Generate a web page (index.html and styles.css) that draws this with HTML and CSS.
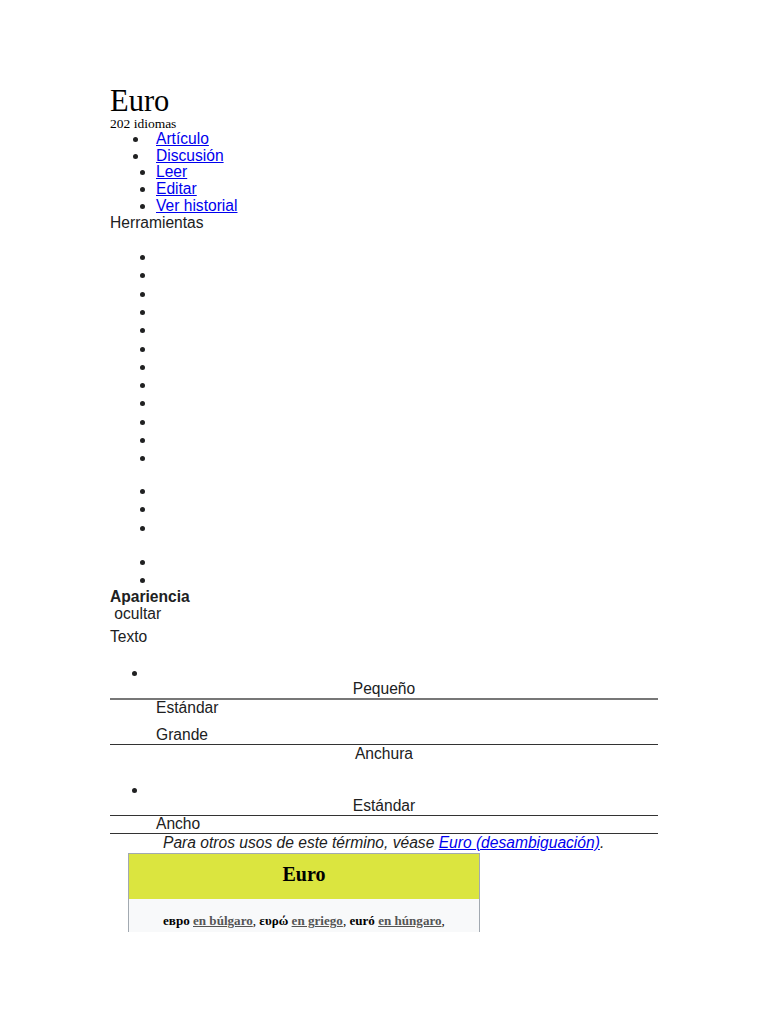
FILE: index.html
```html
<!DOCTYPE html>
<html lang="es">
<head>
<meta charset="utf-8">
<title>Euro</title>
<link rel="stylesheet" href="styles.css">
</head>
<body>
<div class="page">
  <h1 class="title">Euro</h1>
  <div class="langs">202 idiomas</div>
  <ul class="nav">
    <li class="nav-wide"><a href="#">Artículo</a></li>
    <li class="nav-wide"><a href="#">Discusión</a></li>
    <li><a href="#">Leer</a></li>
    <li><a href="#">Editar</a></li>
    <li><a href="#">Ver historial</a></li>
  </ul>
  <div class="plain">Herramientas</div>
  <ul class="empty g1">
    <li></li><li></li><li></li><li></li><li></li><li></li>
    <li></li><li></li><li></li><li></li><li></li><li></li>
  </ul>
  <ul class="empty g2">
    <li></li><li></li><li></li>
  </ul>
  <ul class="empty g3">
    <li></li><li></li>
  </ul>
  <div class="plain bold">Apariencia</div>
  <div class="plain hide">&nbsp;ocultar</div>
  <div class="plain texto">Texto</div>
  <ul class="single"><li></li></ul>
  <div class="center rule-gray">Pequeño</div>
  <div class="option">Estándar</div>
  <div class="option grande">Grande</div>
  <div class="center rule-top">Anchura</div>
  <ul class="single"><li></li></ul>
  <div class="center rule-bottom">Estándar</div>
  <div class="option rule-bottom">Ancho</div>
  <div class="hatnote">Para otros usos de este término, véase <a href="#">Euro (desambiguación)</a>.</div>
  <div class="infobox">
    <div class="infobox-head">Euro</div>
    <div class="infobox-body">
      <b>евро</b> <a href="#">en búlgaro</a>, <b>ευρώ</b> <a href="#">en griego</a>, <b>euró</b> <a href="#">en húngaro</a>,
    </div>
  </div>
</div>
</body>
</html>
```

FILE: styles.css
```css
html, body {
  margin: 0;
  padding: 0;
  background: #ffffff;
}

body {
  color: #202122;
  font-family: "Liberation Sans", Arial, sans-serif;
  font-size: 15.6px;
}

.page {
  margin-left: 110px;
  width: 548px;
  padding-top: 86px;
}

.title {
  margin: 0;
  font-family: "Liberation Serif", "Times New Roman", serif;
  font-weight: normal;
  font-size: 30.5px;
  line-height: 30px;
  color: #000;
}

.langs {
  font-family: "Liberation Serif", "Times New Roman", serif;
  font-size: 13.5px;
  line-height: 15px;
  color: #000;
}

a {
  color: #0000ee;
}

.nav {
  margin: 0;
  padding-left: 46px;
  line-height: 16.7px;
}

.nav-wide {
  margin-left: -7px;
  padding-left: 7px;
}

.plain {
  line-height: 16.7px;
}

.bold {
  font-weight: bold;
}

.texto {
  margin-top: 6px;
}

.empty {
  margin: 0;
  padding-left: 46px;
}

.empty li {
  height: 18.27px;
  line-height: 18.27px;
}

.g1 { margin-top: 17px; }
.g2 { margin-top: 14.7px; }
.g3 { margin-top: 16px; }

.single {
  margin: 19px 0 0;
  padding-left: 38px;
}

.single li {
  height: 16.7px;
  line-height: 16.7px;
}

.center {
  text-align: center;
  line-height: 16.7px;
}

.option {
  padding-left: 46px;
  line-height: 16.7px;
}

.rule-gray {
  border-bottom: 2px solid #777777;
}

.grande {
  margin-top: 10.5px;
}

.rule-top {
  border-top: 1.5px solid #333333;
  padding-top: 1px;
}

.rule-bottom {
  border-bottom: 1.5px solid #333333;
}

.hatnote {
  margin-top: 1px;
  padding-left: 53px;
  font-style: italic;
  line-height: 16.7px;
}

.infobox {
  margin: 2px 0 0 18px;
  width: 350px;
  height: 78px;
  overflow: hidden;
  border: 1px solid #a2a9b1;
  border-bottom: none;
  background: #f8f9fa;
  font-family: "Liberation Serif", "Times New Roman", serif;
}

.infobox-head {
  height: 45px;
  line-height: 41px;
  background: #dbe53f;
  text-align: center;
  font-weight: bold;
  font-size: 20px;
  color: #000;
}

.infobox-body {
  padding: 14px 0 0 34px;
  font-size: 13.1px;
  line-height: 16px;
  color: #000;
  white-space: nowrap;
}

.infobox-body a {
  color: #555555;
  font-weight: bold;
}
```
